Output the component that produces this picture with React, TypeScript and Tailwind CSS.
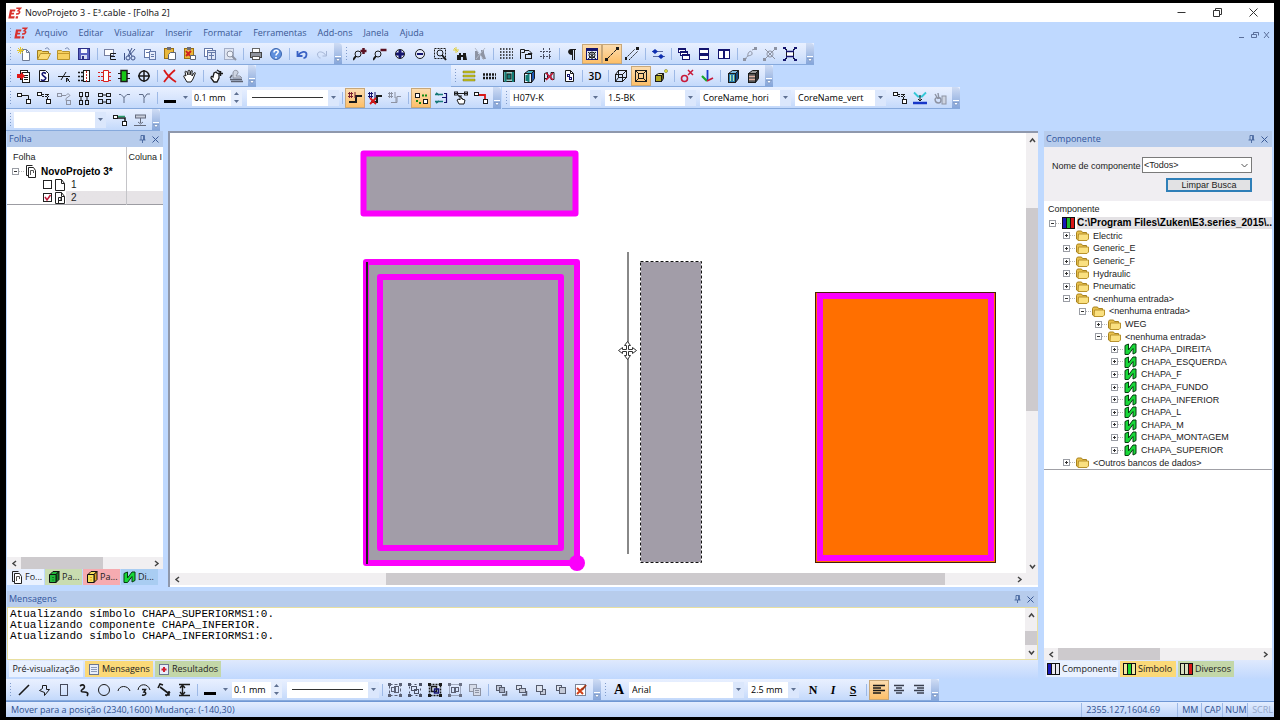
import type { ReactNode } from "react";

const K = "#1a1a1a";
const N = "#14146e";
const G = "#8d93a3";

type LineProps = { d: string; c?: string; f?: string; w?: number; dash?: string };
function L({ d, c = K, f = "none", w = 1, dash }: LineProps) {
  return <path d={d} stroke={c} fill={f} strokeWidth={w} strokeDasharray={dash} />;
}
type BoxProps = { x: number; y: number; w: number; h: number; c?: string; f?: string; s?: number };
function B({ x, y, w, h, c = K, f = "none", s = 1 }: BoxProps) {
  return <rect x={x} y={y} width={w} height={h} stroke={c} fill={f} strokeWidth={s} />;
}

function group(c: string, outline: string, s: number, inner: ReactNode) {
  return (
    <>
      <rect x="1.500" y="1.500" width="11" height="11" fill="none" stroke={c} strokeDasharray={outline} strokeWidth={s} />
      {inner}
      <path d="M0 0h3v3H0zM11 0h3v3h-3zM0 11h3v3H0zM11 11h3v3h-3z" fill={c} />
    </>
  );
}

function cube(front: string, top: string, side: string, inner?: ReactNode) {
  return (
    <>
      <L d="M2.5 4.5l4-3h6l-3 3z" f={top} />
      <L d="M9.5 4.5l3-3v8l-3 4z" f={side} />
      <B x={2.5} y={4.5} w={7} h={9} f={front} />
      {inner}
    </>
  );
}

const icons: Record<string, ReactNode> = {
  newDoc: (
    <>
      <L d="M5.500 2.500h4l3 3v8h-7z" c="#6d7a94" f="#fff" />
      <L d="M9.500 2.500v3h3" c="#6d7a94" />
      <L d="M3.500 0v7M0 3.500h7M1 1l5 5M6 1L1 6" c="#e3c52c" />
    </>
  ),
  open: (
    <>
      <L d="M.5 12.500v-9h4l1 1h6v2" c="#a07c1c" f="#f0cf5c" />
      <L d="M.5 12.500l3-6h10l-3 6z" c="#b8942c" f="#fbdc78" />
      <L d="M8 2c2-2 4-1 4 1" c="#7083ab" />
    </>
  ),
  folderUp: (
    <>
      <L d="M.5 12.500v-9h4l1 1h7v8z" c="#b8942c" f="#f6d060" />
      <L d="M.5 6.500h12" c="#c59a2c" />
      <L d="M8 2c2-2 4-1 4 1" c="#7083ab" />
    </>
  ),
  save: (
    <>
      <B x={1.5} y={1.5} w={11} h={11} c="#2b2f86" f="#5a62c0" />
      <rect x="4" y="2" width="6" height="4" fill="#f4f6ff" />
      <rect x="4" y="8" width="6" height="4" fill="#d5daf3" />
      <rect x="5" y="9" width="2" height="3" fill="#2b2f86" />
    </>
  ),
  copyShape: (
    <>
      <B x={1.5} y={2.5} w={9} h={6} c="#7780a0" f="#fff" />
      <L d="M13 6.500H7.500v6H13M8 9.500h4" c={K} />
    </>
  ),
  cut: (
    <>
      <L d="M9 1L5 9M12 2L6 9" c="#3f5288" />
      <circle cx="5" cy="11" r="2" fill="none" stroke="#3f5288" />
      <circle cx="10" cy="11" r="2" fill="none" stroke="#3f5288" />
      <L d="M5 2l4 7" c="#3f5288" />
      <path d="M1 6h1v7H1z" fill="#3f5288" />
    </>
  ),
  copy: (
    <>
      <B x={1.5} y={2.5} w={6} h={8} c="#6579a8" f="#fff" />
      <B x={6.5} y={4.5} w={6} h={8} c="#6579a8" f="#e6ecfa" />
      <L d="M3 5.500h3M8 7.500h3M8 9.500h3" c="#6579a8" />
    </>
  ),
  paste: (
    <>
      <B x={1.5} y={1.5} w={9} h={10} c="#9a6f12" f="#e9b83c" />
      <rect x="4" y="0" width="4" height="3" fill="#6f6f78" />
      <L d="M5.500 7.500l2-2h5v7h-7z" c="#5a6478" f="#fff" />
    </>
  ),
  pasteRed: (
    <>
      <B x={1.5} y={1.5} w={9} h={10} c="#9a6f12" f="#e9b83c" />
      <rect x="4" y="0" width="4" height="3" fill="#6f6f78" />
      <L d="M3 4l4 5M8 4L3 9" c="#d02020" w={2} />
      <L d="M7.500 8.500h5v4h-5z" c="#5a6478" f="#fff" />
    </>
  ),
  sheets: (
    <>
      <B x={1.5} y={1.5} w={8} h={8} c="#6579a8" f="#fff" />
      <B x={4.5} y={3.5} w={8} h={9} c="#6579a8" f="#dfe7f7" />
      <L d="M5 5.500h7M6 8.500h5M8.500 6v6" c="#6579a8" />
    </>
  ),
  preview: (
    <>
      <B x={1.5} y={1.5} w={9} h={11} c="#a3aec8" f="#dfe5f2" />
      <circle cx="7" cy="7" r="3" fill="#eef2fb" stroke={G} />
      <L d="M9 9l4 4" c={G} w={2} />
    </>
  ),
  print: (
    <>
      <B x={3.5} y={1.5} w={7} h={4} c="#666" f="#fff" />
      <B x={1.5} y={5.5} w={11} h={5} c="#444" f="#8f939d" />
      <B x={3.5} y={9.5} w={7} h={3} c="#555" f="#fff" />
    </>
  ),
  help: (
    <>
      <circle cx="7" cy="7" r="5.500" fill="#5f90dd" stroke="#3c66b0" />
      <L d="M5 5.500c0-3 5-3 4 0-.5 1-2 1.500-2 3M7 10v1.500" c="#fff" w={1.6} />
    </>
  ),
  undo: <L d="M2.500 4v5h5M3 8.500C6 4 11 4 11.500 7c0 2-1 4-3 4" c="#3a62c4" w={1.8} />,
  redo: <L d="M11.500 4v5h-4M11 8.500C8 4 3 4 2.500 7c0 2 1 4 3 4" c="#a6b6d6" w={1} />,
  zoomIn: (
    <>
      <circle cx="5" cy="7" r="3" fill="none" stroke={K} />
      <L d="M3 9l-3 4" w={2} />
      <L d="M10.500 1v6M7.500 4h6" c="#5a1020" w={2.5} />
    </>
  ),
  zoomOut: (
    <>
      <circle cx="5" cy="7" r="3" fill="none" stroke={K} />
      <L d="M3 9l-3 4" w={2} />
      <L d="M7.500 3h6" c="#5a1020" w={2.5} />
    </>
  ),
  plus: (
    <>
      <circle cx="7" cy="7" r="4.500" fill="#e6ecfa" stroke={K} />
      <L d="M7 3v8M3 7h8" c={N} w={3} />
    </>
  ),
  minus: (
    <>
      <circle cx="7" cy="7" r="4.500" fill="#e6ecfa" stroke={K} />
      <L d="M4 7h6" c={N} w={2} />
    </>
  ),
  zoomArea: (
    <>
      <rect x="1.500" y="1.500" width="11" height="10" fill="none" stroke={K} strokeDasharray="2 1" />
      <circle cx="7" cy="6" r="3" fill="none" stroke={K} />
      <L d="M9 8l4 5" w={2} />
    </>
  ),
  find: (
    <>
      <L d="M3 0v6M0 3h6M1 1l4 4" c="#e0d040" />
      <path d="M4 8h2V6h2v2h2V6h3v2l1 5h-4v-3H8v3H4z" fill={K} />
    </>
  ),
  findOff: (
    <>
      <path d="M2 8V4h3v3h3V3h3v3l2 6H9V9H7v4H2z" fill={G} />
      <L d="M2 1l9 12M12 1L3 12" c="#b4bbca" />
    </>
  ),
  gridDots: <L d="M1 2h13M1 5h13M1 8h13M1 11h13" dash="1.500 1.500" w={1.5} />,
  shapes: (
    <>
      <L d="M1.500 12V2.500h4v3h-3M6 3.500h4l3 3H9" />
      <B x={6.5} y={7.5} w={6} h={4} />
    </>
  ),
  gridLines: <L d="M4.500 1v12M10.500 1v12M1 4.500h12M1 9.500h12" c="#4a4f62" dash="2 1" />,
  pilcrow: <path d="M6 2h5v1h-1v10H9V3H8v10H7V8C2 8 2 2 6 2z" fill={K} />,
  frameIcon: (
    <>
      <B x={1.5} y={1.5} w={11} h={11} c={N} f="#e9eefb" />
      <rect x="1" y="1" width="12" height="3" fill={N} />
      <circle cx="7" cy="8" r="3" fill="none" stroke={K} />
      <L d="M3 5l8 7M11 5l-8 7M7 5v7" />
    </>
  ),
  lineNodes: (
    <>
      <L d="M2 12L12 2" dash="4 1" />
      <path d="M0 11h3v3H0zM11 0h3v3h-3z" fill={K} />
    </>
  ),
  linesDouble: (
    <>
      <L d="M1 11L10 2M4 13l9-9" dash="2 1" />
      <path d="M11 0h3v3h-3zM0 10h2v3H0z" fill={K} />
    </>
  ),
  sliders: (
    <>
      <L d="M1 4.500h11M2 9.500h12" c="#5c6ca0" />
      <path d="M4 2l3 2.500L4 7 1 4.500zM10 7l3 2.500-3 2.500-3-2.500z" fill="#1030b0" />
    </>
  ),
  cascade: (
    <>
      <B x={1.5} y={1.5} w={7} h={4} c={N} f="#fff" />
      <B x={3.5} y={4.5} w={7} h={4} c={N} f="#fff" />
      <B x={5.5} y={7.5} w={7} h={5} c={N} f="#fff" />
      <path d="M1 1h8v2H1zM3 4h8v2H3zM5 7h8v2H5z" fill={N} />
    </>
  ),
  tileH: (
    <>
      <B x={2.5} y={1.5} w={9} h={5} c={N} f="#fff" />
      <B x={2.5} y={7.5} w={9} h={5} c={N} f="#fff" />
      <path d="M2 1h10v2H2zM2 7h10v2H2z" fill={N} />
    </>
  ),
  tileV: (
    <>
      <B x={1.5} y={2.5} w={5} h={9} c={N} f="#fff" />
      <B x={7.5} y={2.5} w={5} h={9} c={N} f="#fff" />
      <path d="M1 2h12v2H1z" fill={N} />
    </>
  ),
  node: (
    <>
      <L d="M3 12c0-5 7-2 6-6s-5 0-4 3M9 3l3-1" c={G} />
      <path d="M0 11h3v3H0zM11 0h3v3h-3z" fill={G} />
    </>
  ),
  nodeOff: (
    <>
      <L d="M2 2l10 10M12 2L2 12M4 7c0-4 6-4 6 0s-6 4-6 0" c={G} />
      <path d="M0 11h3v3H0zM11 0h3v3h-3z" fill={G} />
    </>
  ),
  stretch: (
    <>
      <rect x="4" y="5" width="6" height="4" fill="#fff" />
      <L d="M3.500 2v10M10.500 2v10" />
      <L d="M3 4.500h8M3 9.500h8" c={N} w={1.6} />
      <L d="M1 1l3 3M13 1l-3 3M1 13l3-3M13 13l-3-3" c={N} />
      <path d="M0 0h3v2H0zM11 0h3v2h-3zM0 12h3v2H0zM11 12h3v2h-3z" fill={N} />
    </>
  ),
  importDoc: (
    <>
      <B x={3.5} y={1.5} w={7} h={9} f="#fff" />
      <B x={5.5} y={3.5} w={7} h={10} f="#fff" />
      <L d="M7 6.500h4M7 8.500h4M7 10.500h4" />
      <path d="M0 5h4V3l4 4-4 4V9H0z" fill="#e01818" />
    </>
  ),
  symbolDoc: (
    <>
      <L d="M2.500 1.500h6l3 3v8h-9z" f="#fff" />
      <L d="M9 4.500c-3-2-5 0-3 2s4 2 2 4-4 0-4 0" c={N} w={1.6} />
    </>
  ),
  fraction: (
    <>
      <L d="M1 7.500h12M4 11L9 3" />
      <L d="M9.500 9v4M10 11h2l-2-2M11 11l2 2" />
    </>
  ),
  connector: (
    <>
      <B x={6.5} y={1.5} w={6} h={11} f="#fff" />
      <L d="M9.500 2v11" c="#c02020" dash="2 1" />
      <L d="M1 3.500h5M1 7.500h5M1 11.500h5" dash="2 1" w={1.5} />
    </>
  ),
  connectorRed: (
    <>
      <L d="M6.500 1.500h5v11h-5z" c="#d82020" f="#fff" />
      <L d="M1 3.500h6M1 7.500h6M1 11.500h6" c="#d82020" dash="2 1" />
      <L d="M12 3.500h2M12 7.500h2M12 11.500h2" c="#d82020" />
    </>
  ),
  chip: (
    <>
      <L d="M1 4.500h12M1 9.500h12" />
      <B x={4} y={1.5} w={6} h={11} f="#18c818" s={1.5} />
    </>
  ),
  target: (
    <>
      <circle cx="7" cy="7" r="5" fill="none" stroke={K} strokeWidth="1.500" />
      <L d="M7 1v12M1 7h12" w={1.5} />
    </>
  ),
  cross: <L d="M1 1c3 5 7 9 12 12M12 1C8 4 4 9 1 13" c="#d81818" w={1.8} />,
  hand: <L d="M4 13L1 8c-1-2 1-2 2-1L2 3c0-1 1-1 2 0l1 3V2c0-1 2-1 2 0v4l1-4c1-1 2 0 1 1v4l2-3c1-1 2 0 1 1l-2 5-2 3z" f="#fff" />,
  handTurn: (
    <>
      <L d="M5 13L2 9c0-2 1-2 2-1l1-4 2-1 1 1 2 1v4l-2 4z" f="#fff" w={1.3} />
      <L d="M9 4.500h5M11.500 2v5M8 1l3 2" w={1.5} />
    </>
  ),
  stamp: (
    <>
      <L d="M4 4c0-4 6-3 5 0L7 7h4l2 2H4z" c={G} f="#cdd4e2" />
      <L d="M1 10.500h12M2 12.500h12M3 6L1 9" c="#5c6272" w={1.5} />
    </>
  ),
  conn1: (
    <>
      <B x={0.5} y={2.5} w={4} h={3} f="#fff" />
      <B x={9.5} y={8.5} w={4} h={4} f="#fff" />
      <L d="M5 4.500h6.500V8" />
    </>
  ),
  conn2: (
    <>
      <B x={0.5} y={1.5} w={4} h={3} f="#fff" />
      <B x={9.5} y={8.5} w={4} h={4} f="#fff" />
      <L d="M5 3.500h7M5 5.500h7M10.500 3v5" dash="2 1" />
    </>
  ),
  conn3: (
    <>
      <B x={0.5} y={2.5} w={4} h={3} c={G} />
      <B x={9.5} y={9.5} w={4} h={4} c={G} />
      <L d="M5 4.500h4l2-2 2 2-4 3v2" c={G} />
    </>
  ),
  conn4: (
    <>
      <B x={2.5} y={1.5} w={3} h={4} />
      <B x={8.5} y={1.5} w={3} h={4} />
      <B x={2.5} y={9.5} w={3} h={4} />
      <B x={8.5} y={9.5} w={3} h={4} />
      <L d="M4 6v3M10 6v3" />
    </>
  ),
  conn5: (
    <>
      <B x={1.5} y={2.5} w={4} h={3} />
      <B x={9.5} y={2.5} w={4} h={3} />
      <B x={1.5} y={8.5} w={4} h={4} />
      <B x={9.5} y={8.5} w={4} h={4} />
      <L d="M6 4h3M6 11h3" />
    </>
  ),
  branchY: <L d="M2 3.500h2l3 3 3-3h3M7 6v6" c="#5d6a86" />,
  branchT: <L d="M2 3.500h4l1 3M7 12V7l3-4h3" c="#5d6a86" />,
  wireTag: (
    <>
      <L d="M1 11h7V5h6" w={2} />
      <L d="M0 2.500h5M0 5.500h5M1.500 1v6M3.500 1v6M7 1v6" c="#7a2030" />
    </>
  ),
  wireTagX: (
    <>
      <L d="M3 11h6V5h5" w={2} />
      <L d="M0 2.500h5M0 5.500h5M1.500 1v6M3.500 1v6M7 1v6" c={N} />
      <L d="M2 7l6 6M8 7l-6 6" c="#d81818" w={1.8} />
    </>
  ),
  wireTagOff: (
    <>
      <L d="M3 11.500h6V5.500h4M8 11V6" c={G} />
      <L d="M0 2.500h5M0 5.500h5M1.500 1v6M3.500 1v6M7 1v6" c={G} />
    </>
  ),
  autoConn: (
    <>
      <B x={1.5} y={2.5} w={4} h={4} f="#fff" />
      <B x={9.5} y={8.5} w={4} h={4} f="#fff" />
      <L d="M8 4.500h2M11 4.500h2M3 9v2M5 12h2" c="#108a10" w={2} />
    </>
  ),
  swap: (
    <>
      <L d="M1 3.500h8M1 10.500h8M2 2l3 2M2 12l3-2" c="#167878" w={1.6} />
      <L d="M10 2.500h2.500v9H10M8 6.500h4" c={N} w={1.2} />
    </>
  ),
  handWires: (
    <>
      <L d="M1 2.500h12M2 2l9 8M4 5h4" />
      <B x={0.5} y={1} w={3} h={3} />
      <B x={10.5} y={1} w={3} h={3} />
      <L d="M5 13l-2-4 2-1 1 1V5l2 3 3 1-1 4z" f="#fff" />
    </>
  ),
  connRed: (
    <>
      <B x={0.5} y={1.5} w={4} h={3} f="#fff" />
      <B x={9.5} y={8.5} w={4} h={4} f="#fff" />
      <L d="M5 4h6v4" c="#d81818" w={1.8} />
    </>
  ),
  strips: <path d="M1 2h12v2H1zM1 6h12v2H1zM1 10h12v2H1z" fill="#c8c41c" stroke="#77741a" strokeWidth=".5" />,
  rail: <L d="M1 5.500h13M1 9h13" dash="2 1" w={2.5} />,
  panelTeal: (
    <>
      <B x={1.5} y={1.5} w={11} h={11} f="#9fd0cc" />
      <L d="M3.500 2v11M11 2v11" c="#137d76" w={2} />
      <B x={5} y={5} w={4} h={5} f="#137d76" />
      <L d="M1 2.500h12" />
    </>
  ),
  cabinetTeal: cube("#e8f0ff", "#48b0c0", "#1a58b8", <L d="M6.500 5v8M4.500 6v6" c="#137d76" w={2} />),
  redCross: (
    <>
      <L d="M2.500 13V4.500l3-1v6h-3M9 3.500h3v7H9z" />
      <L d="M4 4l7 7M11 4l-7 7" c="#c81838" w={1.7} />
    </>
  ),
  docBox: (
    <>
      <L d="M3.500 1.500h5l3 3v8h-8z" f="#fff" />
      <L d="M8.500 1.500v3h3" />
      <B x={5.5} y={5.5} w={2} h={2} c={N} />
      <B x={7.5} y={8.5} w={2} h={2} c={N} />
    </>
  ),
  text3d: (
    <text x="7" y="11" textAnchor="middle" className="fill-black font-['Open_Sans',sans-serif] text-[10px] font-semibold">
      3D
    </text>
  ),
  wireCube: (
    <>
      <B x={1.5} y={5.5} w={7} h={7} />
      <B x={4.5} y={1.5} w={8} h={7} />
      <L d="M1.500 5.500l3-4M8.500 5.500l4-4M8.500 12.500l4-4M1.500 12.500l3-4" />
    </>
  ),
  bevel: (
    <>
      <B x={1.5} y={1.5} w={11} h={11} />
      <B x={4.5} y={4.5} w={5} h={5} />
      <L d="M1.500 1.500l3 3M12.500 1.500l-3 3M1.500 12.500l3-3M12.500 12.500l-3-3" />
    </>
  ),
  goldCube: (
    <>
      <L d="M1.500 6.500l3-2h5l-2 2z" f="#e8e090" />
      <L d="M7.500 6.500l2-2v5l-2 3z" f="#6e6a10" />
      <B x={1.5} y={6.5} w={6} h={6} f="#b0a820" />
      <circle cx="12" cy="2" r="1.500" fill="#f0f040" stroke="#77741a" strokeWidth=".6" />
    </>
  ),
  circleX: (
    <>
      <circle cx="4.500" cy="9.500" r="3" fill="none" stroke="#c81838" strokeWidth="1.600" />
      <L d="M8 1l5 5M13 1L8 6" c="#c81838" w={1.5} />
    </>
  ),
  axes: (
    <>
      <L d="M7.500 1v10" c="#1838c8" w={1.8} />
      <L d="M7 12L2 7" c="#18a828" w={2.2} />
      <L d="M7 12l6-3" c="#c81838" w={1.8} />
    </>
  ),
  cabA: cube("#2d7fae", "#7cb8e0", "#154a80", <L d="M4.500 6v6M7.500 6v6" c="#b8e8b0" />),
  cabB: cube("#555", "#999", "#333", <L d="M3 7.500h6M3 10.500h6" c="#e0b0a0" w={1.5} />),
  tagGreen: (
    <>
      <B x={0.5} y={2.5} w={4} h={3} f="#fff" />
      <B x={9.5} y={8.5} w={4} h={4} f="#fff" />
      <L d="M5 5h7v3" w={1.5} />
      <L d="M5 3.500h7" c="#2a9a6a" w={1.5} />
    </>
  ),
  tagDown: (
    <>
      <B x={2.5} y={2} w={10} h={3} c="#656b7c" f="#c9cedb" />
      <L d="M7.500 5v5M5 9l2.500 2L10 9M1 12.500h12" c="#656b7c" />
    </>
  ),
  cyanDown: (
    <>
      <L d="M1 1.500l4 4h4l4-4" c="#35c8d8" w={1.8} />
      <L d="M7 4v6M5 8l2 2 2-2" />
      <L d="M0 12h14" c="#1838c8" w={2.5} />
    </>
  ),
  wrenchOff: (
    <>
      <L d="M2 3l3 5M5 2l1 6M2 9c1 4 6 4 6 0s-6-3-6 0" c={G} w={1.4} />
      <B x={9} y={5} w={4} h={8} c={G} f="#cdd4e2" />
    </>
  ),
  lineTool: <L d="M2 12L12 2" w={1.6} />,
  polygon: <L d="M5.500 2.500h4v4h3l-5 6v-3l-5-2 3-2z" />,
  rectTool: <B x={3.5} y={1.5} w={7} h={11} c="#44495a" />,
  spline: <L d="M3 3c4-3 6 1 3 3s-2 3 1 3 5 1 3 4" w={1.6} />,
  circleTool: <circle cx="7" cy="7" r="5.500" fill="none" stroke={K} />,
  arcTool: <L d="M1 8c1-6 10-6 12 0" />,
  arc3: (
    <>
      <L d="M1 7c1-7 10-7 12 0" />
      <L d="M5 6.500h3.500L7 9c3 0 2 4-2 3" w={1.5} />
    </>
  ),
  dimension: <L d="M3 4l8 6M1 5l2-4 3 1M8 12l4 0v-4M13 9l-4 4" w={1.6} />,
  dimV: (
    <>
      <L d="M2 1.500h11M2 12.500h11" w={1.4} />
      <L d="M5.500 2v10M3 5l2.500-3L8 5M3 9l2.500 3L8 9" w={1.4} />
    </>
  ),
  groupA: group(
    "#5b6174",
    "3 2",
    1,
    <>
      <B x={3.5} y={4.5} w={4} h={4} c="#5b6174" />
      <B x={6.5} y={3.5} w={4} h={6} c="#5b6174" />
    </>,
  ),
  groupB: group(
    "#4b5164",
    "2 3",
    1,
    <>
      <B x={3.5} y={3.5} w={5} h={4} c="#4b5164" />
      <B x={6.5} y={6.5} w={4} h={4} c="#4b5164" />
    </>,
  ),
  groupC: group(
    K,
    "2 1",
    1.5,
    <>
      <B x={3.5} y={3.5} w={5} h={5} s={1.5} />
      <B x={6.5} y={6} w={4} h={4} c={N} s={1.5} />
    </>,
  ),
  groupD: group(
    "#6b7184",
    "1 1",
    1,
    <>
      <B x={3.5} y={4.5} w={4} h={5} c="#5b6174" />
      <B x={6.5} y={4.5} w={4} h={4} c="#5b6174" />
    </>,
  ),
  layerOff: (
    <>
      <B x={1.5} y={1.5} w={7} h={7} c={G} f="#d5dbe8" />
      <B x={5.5} y={5.5} w={7} h={7} c={G} f="#d5dbe8" />
      <L d="M7 7.500h4M7 9.500h4" c={G} />
    </>
  ),
  orderA: (
    <>
      <B x={2.5} y={2.5} w={5} h={5} c="#555b6c" f="#c4cad8" />
      <B x={5.5} y={4.5} w={5} h={5} c="#555b6c" f="#a8b0c4" />
      <L d="M8 12h4.500V8" c="#555b6c" w={1.5} />
    </>
  ),
  orderB: (
    <>
      <B x={2.5} y={2.5} w={5} h={4} c="#555b6c" f="#dfe4ee" />
      <B x={5.5} y={5.5} w={6} h={4} c="#555b6c" f="#c4cad8" />
      <L d="M8 12h4.500V8" c="#555b6c" w={1.5} />
    </>
  ),
  orderC: (
    <>
      <B x={6.5} y={6.5} w={5} h={5} c="#555b6c" f="#c4cad8" />
      <B x={2.5} y={2.5} w={6} h={6} c="#555b6c" f="#dfe4ee" />
    </>
  ),
  orderD: (
    <>
      <B x={2.5} y={2.5} w={5} h={5} c="#555b6c" f="#dfe4ee" />
      <B x={5.5} y={4.5} w={6} h={6} c="#555b6c" f="#c4cad8" />
    </>
  ),
  editProps: (
    <>
      <B x={1.5} y={1.5} w={10} h={11} c="#7a8296" f="#fff" />
      <L d="M3 5l6 6M9 5l-6 6" c="#d04018" w={2} />
      <L d="M8 7l4-5" c="#a03818" w={2} />
    </>
  ),
  alignL: <L d="M1 2.500h12M1 5h8M1 7.500h12M1 10h8" w={1.5} />,
  alignC: <L d="M2 2.500h10M4 5h6M2 7.500h10M4 10h6" w={1.5} c="#3a3f4e" />,
  alignR: <L d="M2 2.500h10M5 5h7M2 7.500h10M5 10h7" w={1.5} c="#3a3f4e" />,
};

function Icon({ name }: { name: string }) {
  return (
    <svg viewBox="0 0 14 14" className="size-[14px] shrink-0" aria-hidden="true">
      {icons[name]}
    </svg>
  );
}

function ToolButton({ name, on, children }: { name: string; on?: boolean; children?: ReactNode }) {
  return (
    <button
      type="button"
      aria-label={name}
      className={
        on
          ? "flex h-5 w-5 shrink-0 items-center justify-center border border-[#c9a878] bg-linear-to-b from-[#fbdcae] to-[#fdbf68]"
          : "flex h-5 w-5 shrink-0 items-center justify-center"
      }
    >
      {children ?? <Icon name={name} />}
    </button>
  );
}

function Tools({ list, active = [] }: { list: string; active?: string[] }) {
  return (
    <>
      {list.split(" ").map((n, i) =>
        n === "|" ? (
          <span key={i} className="flex w-[6px] shrink-0 justify-center">
            <span className="h-3 w-px bg-[#9db9e6]" />
          </span>
        ) : (
          <ToolButton key={i} name={n} on={active.includes(n)} />
        ),
      )}
    </>
  );
}

function Toolbar({ children }: { children: ReactNode }) {
  return (
    <div role="toolbar" className="flex h-[22px] items-center border-b border-[#86a9dc] bg-linear-to-b from-[#e9f0ff] via-[#d9e6fd] to-[#c3d9fb]">
      <span className="flex w-2 shrink-0 flex-col items-center gap-[2px]">
        <span className="size-px bg-[#7f9bcb]" />
        <span className="size-px bg-[#7f9bcb]" />
        <span className="size-px bg-[#7f9bcb]" />
        <span className="size-px bg-[#7f9bcb]" />
        <span className="size-px bg-[#7f9bcb]" />
      </span>
      {children}
      <button type="button" aria-label="Opções da barra" className="ml-[2px] flex h-full w-2 shrink-0 items-end justify-center rounded-tr-sm bg-linear-to-b from-[#cfdcf4] to-[#86a6da] pb-[2px]">
        <svg viewBox="0 0 6 6" className="size-[6px]">
          <path d="M0 .5h6" stroke="#fff" />
          <path d="M.5 2.500h5L3 5.500z" fill="#fff" stroke="#5b7cb4" strokeWidth=".6" />
        </svg>
      </button>
    </div>
  );
}

function Caret() {
  return (
    <svg viewBox="0 0 5 3" className="h-[3px] w-[5px]" aria-hidden="true">
      <path d="M0 0h5L2.500 3z" fill="#5f7192" />
    </svg>
  );
}

function Combo({ label, value, width }: { label: string; value: string; width: string }) {
  return (
    <span className={`mr-1 grid h-4 shrink-0 ${width}`}>
      <select aria-label={label} className="col-start-1 row-start-1 h-4 min-w-0 appearance-none bg-white pl-[3px] text-[9px] leading-4 text-black outline-none">
        <option>{value}</option>
      </select>
      <span className="pointer-events-none col-start-1 row-start-1 flex w-[11px] items-center justify-center justify-self-end bg-[#dbe7fc]">
        <Caret />
      </span>
    </span>
  );
}

function LineStyle() {
  return (
    <span className="grid h-4 w-[92px] shrink-0">
      <select aria-label="Estilo de linha" className="col-start-1 row-start-1 h-4 min-w-0 appearance-none bg-white outline-none" />
      <span className="pointer-events-none col-start-1 row-start-1 mr-4 ml-[5px] h-px self-center bg-[#333]" />
      <span className="pointer-events-none col-start-1 row-start-1 flex h-4 w-[11px] items-center justify-center justify-self-end bg-[#dbe7fc]">
        <Caret />
      </span>
    </span>
  );
}

function LineColour() {
  return (
    <button type="button" aria-label="Cor da linha" className="flex h-4 w-8 shrink-0 items-center justify-between pr-1 pl-1">
      <span className="mt-2 h-[3px] w-3 bg-black" />
      <Caret />
    </button>
  );
}

function WidthBox() {
  return (
    <span className="mr-[5px] flex h-4 w-[50px] shrink-0 bg-white">
      <input aria-label="Espessura" defaultValue="0.1 mm" className="min-w-0 flex-1 pl-[2px] text-[9px] text-black outline-none" />
      <span className="flex w-[11px] flex-col bg-[#e6eefd]">
        <button type="button" aria-label="Aumentar" className="flex flex-1 rotate-180 items-center justify-center">
          <Caret />
        </button>
        <button type="button" aria-label="Diminuir" className="flex flex-1 items-center justify-center">
          <Caret />
        </button>
      </span>
    </span>
  );
}

function Logo() {
  return (
    <svg viewBox="0 0 14 12" className="h-3 w-[14px] shrink-0" aria-hidden="true">
      <path d="M2 2.500h5.500L7 4.500H4L3.700 5.700h2.500l-.4 1.800H3.300L3 9.200h3.700l-.5 2.300H.3z" fill="#d8302c" />
      <path d="M8.300 1.200h4.200l-2.300 2.500c2.600.3 1.600 3.600-2.200 3.300" fill="none" stroke="#d8302c" strokeWidth="1.500" />
      <path d="M8 9.300h2.200l-.4 2.200H7.500z" fill="#d8302c" />
    </svg>
  );
}

function DockHeader({ title }: { title: string }) {
  return (
    <div className="flex h-4 shrink-0 items-center bg-[#b7ccec] pr-1 pl-[2px] text-[#32569e]">
      <h2 className="flex-1 text-[9px] leading-4">{title}</h2>
      <button type="button" aria-label="Fixar" className="mr-[6px]">
        <svg viewBox="0 0 7 8" className="h-2 w-[7px]">
          <path d="M2 .5h3.500V5M2 .5V5M.5 5h6M3.500 5v3M4.500 1v4" fill="none" stroke="#3b5a96" strokeWidth=".8" />
        </svg>
      </button>
      <button type="button" aria-label="Fechar">
        <svg viewBox="0 0 7 7" className="size-[7px]">
          <path d="M.5.5l6 6M6.500.5l-6 6" stroke="#3b5a96" />
        </svg>
      </button>
    </div>
  );
}

function Chevron({ turn }: { turn: string }) {
  return (
    <svg viewBox="0 0 7 7" className={`size-[7px] ${turn}`} aria-hidden="true">
      <path d="M1 5l2.500-3L6 5" fill="none" stroke="#444" strokeWidth="1.500" />
    </svg>
  );
}

function HScroll({ before, thumb, after }: { before: string; thumb: string; after: string }) {
  return (
    <div className="flex h-3 min-w-0 flex-1 items-stretch bg-[#f1eff1]">
      <span className="flex w-[14px] items-center justify-center">
        <Chevron turn="-rotate-90" />
      </span>
      <span className={before} />
      <span className={`bg-[#cdcacd] ${thumb}`} />
      <span className={after} />
      <span className="flex w-[14px] items-center justify-center">
        <Chevron turn="rotate-90" />
      </span>
    </div>
  );
}

function VScroll({ before, thumb, after }: { before: string; thumb: string; after: string }) {
  return (
    <div className="flex w-3 shrink-0 flex-col bg-[#f1eff1]">
      <span className="flex h-[14px] items-center justify-center">
        <Chevron turn="rotate-0" />
      </span>
      <span className={before} />
      <span className={`bg-[#cdcacd] ${thumb}`} />
      <span className={after} />
      <span className="flex h-[14px] items-center justify-center">
        <Chevron turn="rotate-180" />
      </span>
    </div>
  );
}

function Toggle({ open }: { open: boolean }) {
  return (
    <svg viewBox="0 0 14 13" className="h-[13px] w-[14px] shrink-0" aria-hidden="true">
      <path d="M8 6.500h6" stroke="#b8b8b8" strokeDasharray="1 1" />
      <rect x="1.500" y="3.500" width="6" height="6" fill="#fff" stroke="#9a9da4" />
      <path d={open ? "M3 6.500h3" : "M3 6.500h3M4.500 5v3"} stroke="#333" />
    </svg>
  );
}

function Folder() {
  return (
    <svg viewBox="0 0 13 11" className="h-[11px] w-[13px] shrink-0" aria-hidden="true">
      <path d="M.5 9V2.500L1.500 1h4l1 1.500h4V9.500h-9z" fill="#e8c04c" stroke="#a8821e" />
      <path d="M2.500 4h10v5l-1.500 1.500H2z" fill="#fae080" stroke="#b8922c" />
    </svg>
  );
}

function SheetGreen() {
  return (
    <svg viewBox="0 0 13 12" className="h-3 w-[13px] shrink-0" aria-hidden="true">
      <path d="M1 2.500L4.500 1v6L9 1h3v8.500L9 11V5.500L4.500 11.500H1z" fill="#18d838" stroke="#063c10" />
    </svg>
  );
}

function Books({ a, b, c }: { a: string; b: string; c: string }) {
  return (
    <svg viewBox="0 0 13 12" className="h-3 w-[13px] shrink-0" aria-hidden="true">
      <rect x=".5" y=".5" width="4" height="11" fill={a} stroke="#111" />
      <rect x="4.500" y=".5" width="4" height="11" fill={b} stroke="#111" />
      <rect x="8.500" y=".5" width="4" height="11" fill={c} stroke="#111" />
    </svg>
  );
}

const indents = ["pl-1", "pl-[18px]", "pl-[34px]", "pl-[50px]", "pl-[66px]"];

const tree: [number, string, boolean][] = [
  [1, "Electric", false],
  [1, "Generic_E", false],
  [1, "Generic_F", false],
  [1, "Hydraulic", false],
  [1, "Pneumatic", false],
  [1, "<nenhuma entrada>", true],
  [2, "<nenhuma entrada>", true],
  [3, "WEG", false],
  [3, "<nenhuma entrada>", true],
  [4, "CHAPA_DIREITA", false],
  [4, "CHAPA_ESQUERDA", false],
  [4, "CHAPA_F", false],
  [4, "CHAPA_FUNDO", false],
  [4, "CHAPA_INFERIOR", false],
  [4, "CHAPA_L", false],
  [4, "CHAPA_M", false],
  [4, "CHAPA_MONTAGEM", false],
  [4, "CHAPA_SUPERIOR", false],
  [1, "<Outros bancos de dados>", false],
];

const menus = ["Arquivo", "Editar", "Visualizar", "Inserir", "Formatar", "Ferramentas", "Add-ons", "Janela", "Ajuda"];

function Drawing() {
  return (
    <svg viewBox="170 133 855 439" className="h-[439px] w-[855px] shrink-0" aria-label="Folha 2">
      <g fill="#a29da8" stroke="#fb00fb" strokeWidth="6" strokeLinejoin="round">
        <rect x="363.500" y="153.500" width="212" height="60" />
        <rect x="366" y="262" width="211" height="301" />
        <rect x="380" y="277" width="181" height="271" />
      </g>
      <path d="M367 262v302" stroke="#222" strokeWidth="2" />
      <circle cx="577" cy="563" r="8" fill="#fb00fb" />
      <path d="M628 252v302" stroke="#888" strokeWidth="2" />
      <rect x="640.500" y="261.500" width="61" height="301" fill="#a29da8" stroke="#fff" />
      <rect x="640.500" y="261.500" width="61" height="301" fill="none" stroke="#111" strokeDasharray="3 2" />
      <rect x="815.500" y="292.500" width="180" height="270" fill="#ff6f00" stroke="#4a1c08" />
      <rect x="820" y="296" width="171" height="262" fill="none" stroke="#fb00fb" strokeWidth="6" />
      <path
        d="M627.500 341.500l3 4h-2v4h4v-2l4 3-4 3v-2h-4v4h2l-3 4-3-4h2v-4h-4v2l-4-3 4-3v2h4v-4h-2z"
        fill="#fff"
        stroke="#333"
      />
    </svg>
  );
}

function SheetIcon({ mark }: { mark?: boolean }) {
  return (
    <svg viewBox="0 0 12 12" className="h-3 w-3 shrink-0" aria-hidden="true">
      <path d="M1.500.5h6l3 4v7h-9z" fill="#fff" stroke="#222" />
      <path d="M7.500.5v4h3" fill="none" stroke="#222" />
      {mark && <path d="M4.500 12V5.500H7v3H4.500M7.500 5v4" fill="none" stroke="#222" />}
    </svg>
  );
}

function StackIcon() {
  return (
    <svg viewBox="0 0 12 13" className="h-[13px] w-3 shrink-0" aria-hidden="true">
      <path d="M1.500 10.500v-10h6M1.500 10.500h2" fill="none" stroke="#222" />
      <path d="M3.500 2.500h5l2 3v7h-7z" fill="#fff" stroke="#222" />
      <path d="M5.500 10V5.500h3V8" fill="none" stroke="#555" />
    </svg>
  );
}

function SheetBox({ id, checked }: { id: string; checked?: boolean }) {
  return (
    <span className="grid size-[9px] shrink-0">
      <input id={id} type="checkbox" defaultChecked={checked} className="peer col-start-1 row-start-1 size-[9px] appearance-none border border-[#222] bg-white" />
      <svg viewBox="0 0 9 9" className="pointer-events-none invisible col-start-1 row-start-1 size-[9px] peer-checked:visible">
        <path d="M2 4l2 3 3.500-5" fill="none" stroke="#c01838" strokeWidth="1.500" />
      </svg>
    </span>
  );
}

function SmallCube({ front, side }: { front: string; side: string }) {
  return (
    <svg viewBox="0 0 11 12" className="h-3 w-[11px] shrink-0" aria-hidden="true">
      <path d="M1 3.500l3-3h6l-3 3z" fill={front} stroke="#111" />
      <path d="M7 3.500l3-3v8l-3 3z" fill={side} stroke="#111" />
      <path d="M.5 3.500H7v8H.5z" fill={front} stroke="#111" />
      <path d="M3 6.500h2M3 9h2" stroke={side} />
    </svg>
  );
}

function LeftDock() {
  return (
    <section className="flex w-[156px] shrink-0 flex-col">
      <DockHeader title="Folha" />
      <div className="flex flex-1 flex-col bg-white font-['Liberation_Sans',sans-serif] text-[9px] text-[#222]">
        <table className="w-full table-fixed border-collapse border-b border-[#9c9ca2] text-left">
          <thead>
            <tr className="h-[18px]">
              <th className="w-[119px] border-r border-[#c4c4c8] pt-1 pl-[6px] font-normal">Folha</th>
              <th className="pt-1 pl-[2px] font-normal whitespace-nowrap">Coluna I</th>
            </tr>
          </thead>
          <tbody>
            <tr className="h-[13px]">
              <td className="border-r border-[#c4c4c8] p-0">
                <span className="flex h-[13px] items-center pl-1">
                  <Toggle open />
                  <StackIcon />
                  <b className="pl-1 text-[10px] leading-[13px] whitespace-nowrap text-black">NovoProjeto 3*</b>
                </span>
              </td>
              <td />
            </tr>
            <tr className="h-[13px]">
              <td className="border-r border-[#c4c4c8] p-0">
                <span className="flex h-[13px] items-center gap-[2px] pl-9">
                  <SheetBox id="sheet-1" />
                  <SheetIcon />
                  <label htmlFor="sheet-1" className="pl-[3px] text-[10px] leading-[13px]">
                    1
                  </label>
                </span>
              </td>
              <td />
            </tr>
            <tr className="h-[13px] bg-[#e6e3e6]">
              <td className="border-r border-[#c4c4c8] p-0">
                <span className="flex h-[13px] items-center gap-[2px] bg-linear-to-r from-white from-50% to-[#e6e3e6] to-50% pl-9">
                  <SheetBox id="sheet-2" checked />
                  <SheetIcon mark />
                  <label htmlFor="sheet-2" className="pl-[3px] text-[10px] leading-[13px]">
                    2
                  </label>
                </span>
              </td>
              <td />
            </tr>
          </tbody>
        </table>
        <span className="flex-1" />
        <div className="flex">
          <HScroll before="" thumb="w-[82px]" after="flex-1" />
        </div>
      </div>
      <div role="tablist" className="flex h-[18px] shrink-0 gap-px text-[9px] text-[#222]">
        <button role="tab" type="button" className="flex h-4 w-[37px] items-center gap-[2px] bg-[#e9f1ff] pl-1">
          <StackIcon />
          Fo...
        </button>
        <button role="tab" type="button" className="flex h-4 w-[37px] items-center gap-[2px] bg-[#c9dcb0] pl-1">
          <SmallCube front="#22b83a" side="#0f7a20" />
          Pa...
        </button>
        <button role="tab" type="button" className="flex h-4 w-[37px] items-center gap-[2px] bg-[#f6abb0] pl-1">
          <SmallCube front="#f4e05a" side="#e0a020" />
          Pa...
        </button>
        <button role="tab" type="button" className="flex h-4 w-[37px] items-center gap-[2px] bg-[#a9cdf2] pl-[2px]">
          <SheetGreen />
          Di...
        </button>
      </div>
    </section>
  );
}

function MessagesDock() {
  return (
    <section className="flex h-[88px] shrink-0 flex-col">
      <DockHeader title="Mensagens" />
      <div className="flex h-[53px] border border-[#e8dfa0] bg-white">
        <pre className="flex-1 pt-px pl-[2px] font-['Liberation_Mono',monospace] text-[11px] leading-[11px] text-black">
          {"Atualizando símbolo CHAPA_SUPERIORMS1:0.\nAtualizando componente CHAPA_INFERIOR.\nAtualizando símbolo CHAPA_INFERIORMS1:0."}
        </pre>
        <VScroll before="flex-1" thumb="h-[14px]" after="" />
      </div>
      <div role="tablist" className="flex flex-1 gap-[2px] bg-linear-to-b from-[#dfe9fd] to-[#c0d8fe] pt-px pl-[2px] text-[9px] text-[#222]">
        <button role="tab" type="button" className="flex h-4 w-[74px] items-center justify-center bg-[#e9f1ff]">
          Pré-visualização
        </button>
        <button role="tab" type="button" aria-selected="true" className="flex h-4 w-[68px] items-center gap-[3px] bg-[#fbd978] pl-1">
          <svg viewBox="0 0 10 11" className="h-[11px] w-[10px]">
            <rect x=".5" y=".5" width="9" height="10" fill="#e8eefa" stroke="#6a7590" />
            <path d="M2 3.500h6M2 5.500h6M2 7.500h6" stroke="#8c9ab8" />
          </svg>
          Mensagens
        </button>
        <button role="tab" type="button" className="flex h-4 w-[66px] items-center gap-[3px] bg-[#c3d7a8] pl-1">
          <svg viewBox="0 0 10 11" className="h-[11px] w-[10px]">
            <rect x=".5" y=".5" width="9" height="10" fill="#e8eefa" stroke="#6a7590" />
            <path d="M5 3v5M2.500 5.500h5" stroke="#d02030" strokeWidth="2" />
          </svg>
          Resultados
        </button>
      </div>
    </section>
  );
}

function ComponentDock() {
  return (
    <section className="flex w-[228px] shrink-0 flex-col">
      <DockHeader title="Componente" />
      <div className="flex flex-1 flex-col bg-white font-['Liberation_Sans',sans-serif] text-[9px] text-[#222]">
        <div className="flex h-[54px] flex-col bg-[#f0eef2] pt-[10px] pr-5 pl-2">
          <div className="flex items-center justify-between">
            <label htmlFor="component-name" className="pt-[2px] leading-3">
              Nome de componente
            </label>
            <span className="grid h-4 w-[110px]">
              <select id="component-name" className="col-start-1 row-start-1 h-4 appearance-none border border-[#7a7a7a] bg-white pl-[1px] leading-3 outline-none">
                <option>&lt;Todos&gt;</option>
              </select>
              <svg viewBox="0 0 7 7" className="pointer-events-none col-start-1 row-start-1 mr-1 size-[7px] self-center justify-self-end">
                <path d="M.5 2l3 3 3-3" fill="none" stroke="#555" />
              </svg>
            </span>
          </div>
          <button type="button" className="mt-[5px] h-[14px] w-[86px] self-end border-2 border-[#2f7fb8] bg-[#e2e2e4] leading-[10px]">
            Limpar Busca
          </button>
        </div>
        <div className="flex h-4 items-center pl-1 leading-3">Componente</div>
        <ul className="grid h-[253px] auto-rows-fr border-b border-[#a0a0a6]">
          <li className={`flex items-center ${indents[0]}`}>
            <Toggle open />
            <Books a="#1818b8" b="#20b830" c="#d81818" />
            <b className="ml-[2px] flex-1 bg-[#e4e2e5] text-[10px] leading-3 whitespace-nowrap text-black">
              C:\Program Files\Zuken\E3.series_2015\..
            </b>
          </li>
          {tree.map(([depth, name, open], i) => (
            <li key={i} className={`flex items-center ${indents[depth]}`}>
              <Toggle open={open} />
              {depth === 4 ? <SheetGreen /> : <Folder />}
              <span className="pl-1 leading-3 whitespace-nowrap">{name}</span>
            </li>
          ))}
        </ul>
        <span className="flex-1" />
        <div className="flex">
          <HScroll before="" thumb="w-[102px]" after="flex-1" />
        </div>
      </div>
      <div role="tablist" className="flex h-[19px] shrink-0 gap-[2px] bg-linear-to-b from-[#dfe9fd] to-[#c0d8fe] pt-px pl-[2px] text-[9px] text-[#222]">
        <button role="tab" type="button" className="flex h-4 w-[72px] items-center gap-[2px] bg-[#e9f1ff] pl-px">
          <Books a="#1818b8" b="#e8e8f0" c="#e8e8f0" />
          Componente
        </button>
        <button role="tab" type="button" aria-selected="true" className="flex h-4 w-14 items-center gap-[2px] bg-[#fbd978] pl-[3px]">
          <Books a="#f0e8a0" b="#20d830" c="#f0e8a0" />
          Símbolo
        </button>
        <button role="tab" type="button" className="flex h-4 w-14 items-center gap-[2px] bg-[#c3d7a8] pl-[2px]">
          <Books a="#d8dfc0" b="#d8dfc0" c="#d81818" />
          Diversos
        </button>
      </div>
    </section>
  );
}

export default function App() {
  return (
    <div className="flex min-h-screen flex-col bg-black px-[6px] py-[3px] font-['Open_Sans',sans-serif]">
      <div className="flex flex-1 flex-col bg-[#bfd9ff]">
        <header className="flex h-[19px] items-center bg-white pr-4 pl-[2px]">
          <Logo />
          <h1 className="flex-1 pl-[3px] font-['Noto_Sans',sans-serif] text-[9px] text-[#222]">NovoProjeto 3 - E³.cable - [Folha 2]</h1>
          <div className="flex items-center gap-[27px]">
            <button type="button" aria-label="Minimizar">
              <svg viewBox="0 0 9 9" className="size-[9px]">
                <path d="M.5 4.500h8" stroke="#333" />
              </svg>
            </button>
            <button type="button" aria-label="Restaurar">
              <svg viewBox="0 0 9 9" className="size-[9px]">
                <path d="M.5 2.500h6v6h-6zM2.500 2.500v-2h6v6h-2" fill="none" stroke="#333" />
              </svg>
            </button>
            <button type="button" aria-label="Fechar janela">
              <svg viewBox="0 0 9 9" className="size-[9px]">
                <path d="M.5.500l8 8M8.500.500l-8 8" stroke="#333" />
              </svg>
            </button>
          </div>
        </header>

        <nav className="flex h-[21px] items-center pr-1">
          <span className="flex w-2 flex-col items-center gap-[2px]">
            <span className="size-px bg-[#7f9bcb]" />
            <span className="size-px bg-[#7f9bcb]" />
            <span className="size-px bg-[#7f9bcb]" />
            <span className="size-px bg-[#7f9bcb]" />
          </span>
          <Logo />
          <ul className="flex flex-1 gap-[11px] pl-[7px] text-[9px] text-[#3a5894]">
            {menus.map((m) => (
              <li key={m}>
                <button type="button">{m}</button>
              </li>
            ))}
          </ul>
          <svg viewBox="0 0 32 8" className="mt-1 h-2 w-8" aria-hidden="true">
            <path d="M1 6.500h5M13.500 3.500h5v3h-5zM15.500 3.500v-2h5v3M26 1l5 6M31 1l-5 6" fill="none" stroke="#5b6f9a" />
          </svg>
        </nav>

        <div className="flex">
          <Toolbar>
            <Tools list="newDoc open folderUp save | copyShape cut copy paste pasteRed sheets preview | print help | undo redo" />
          </Toolbar>
          <Toolbar>
            <Tools
              list="zoomIn zoomOut plus minus zoomArea find findOff | gridDots shapes gridLines | pilcrow frameIcon lineNodes linesDouble | sliders | cascade tileH tileV | node nodeOff stretch"
              active={["frameIcon", "lineNodes"]}
            />
            <span className="w-1" />
          </Toolbar>
        </div>
        <div className="flex gap-[195px]">
          <Toolbar>
            <Tools list="importDoc symbolDoc fraction connector connectorRed chip target | cross hand | handTurn stamp" />
          </Toolbar>
          <Toolbar>
            <Tools
              list="strips rail panelTeal cabinetTeal redCross docBox | text3d | wireCube bevel goldCube | circleX axes | cabA cabB"
              active={["bevel"]}
            />
          </Toolbar>
        </div>
        <div className="flex gap-px">
          <Toolbar>
            <Tools list="conn1 conn2 conn3 conn4 conn5 branchY branchT |" />
            <LineColour />
            <WidthBox />
            <LineStyle />
            <Tools list="| wireTag wireTagX wireTagOff | autoConn swap handWires connRed" active={["wireTag", "autoConn"]} />
          </Toolbar>
          <Toolbar>
            <Combo label="Tipo de fio" value="H07V-K" width="w-[91px]" />
            <Combo label="Fio" value="1.5-BK" width="w-[91px]" />
            <Combo label="Nome horizontal" value="CoreName_hori" width="w-[91px]" />
            <Combo label="Nome vertical" value="CoreName_vert" width="w-[91px]" />
            <Tools list="conn2 cyanDown wrenchOff" />
          </Toolbar>
        </div>
        <div className="flex">
          <Toolbar>
            <Combo label="Sinal" value="" width="w-[92px]" />
            <Tools list="tagGreen tagDown" />
          </Toolbar>
        </div>

        <main className="flex min-h-[548px] flex-1 gap-[6px] pr-[2px] pl-[1px]">
          <div className="flex min-w-0 flex-1 flex-col gap-1">
            <div className="flex min-h-0 flex-1 gap-[5px]">
              <LeftDock />
              <div className="flex min-w-0 flex-1 flex-col border-t-2 border-l-2 border-[#8f98ac] bg-white pb-[2px]">
                <div className="flex flex-1">
                  <div className="flex min-w-0 flex-1 overflow-hidden">
                    <Drawing />
                  </div>
                  <VScroll before="h-[61px]" thumb="h-[203px]" after="flex-1" />
                </div>
                <div className="flex bg-[#f1eff1] pr-3">
                  <HScroll before="w-[202px]" thumb="w-[559px]" after="flex-1" />
                </div>
              </div>
            </div>
            <MessagesDock />
          </div>
          <ComponentDock />
        </main>

        <div className="flex">
          <Toolbar>
            <Tools list="lineTool polygon rectTool spline circleTool arcTool arc3 dimension dimV |" />
            <LineColour />
            <WidthBox />
            <LineStyle />
            <Tools list="| groupA groupB groupC groupD layerOff | orderA orderB orderC orderD editProps" />
          </Toolbar>
          <Toolbar>
            <ToolButton name="Fonte">
              <span className="font-['Liberation_Serif',serif] text-[14px] leading-4 font-bold">A</span>
            </ToolButton>
            <Combo label="Tipo de letra" value="Arial" width="w-[115px]" />
            <Combo label="Altura" value="2.5 mm" width="w-[51px]" />
            <ToolButton name="Negrito">
              <span className="font-['Liberation_Serif',serif] text-xs leading-4 font-bold">N</span>
            </ToolButton>
            <ToolButton name="Itálico">
              <span className="font-['Liberation_Serif',serif] text-xs leading-4 font-bold italic">I</span>
            </ToolButton>
            <ToolButton name="Sublinhado">
              <span className="font-['Liberation_Serif',serif] text-xs leading-4 font-bold underline">S</span>
            </ToolButton>
            <Tools list="| alignL alignC alignR" active={["alignL"]} />
          </Toolbar>
        </div>

        <footer className="flex h-[16px] items-center border-t border-[#6f97d4] bg-linear-to-b from-[#e3edff] to-[#bcd3f8] pr-[1px] pl-[5px] text-[9px] leading-[14px] text-[#2f508f]">
          <span className="flex-1">Mover para a posição (2340,1600) Mudança: (-140,30)</span>
          <span className="w-24 border-l border-[#9db9e6] pl-1">2355.127,1604.69</span>
          <span className="w-6 border-l border-[#9db9e6] pl-1">MM</span>
          <span className="w-[21px] border-l border-[#9db9e6] pl-[2px]">CAP</span>
          <span className="w-[25px] border-l border-[#9db9e6] pl-[2px]">NUM</span>
          <span className="border-l border-[#9db9e6] pl-1 text-[#95a6c8]">SCRL</span>
        </footer>
      </div>
    </div>
  );
}
